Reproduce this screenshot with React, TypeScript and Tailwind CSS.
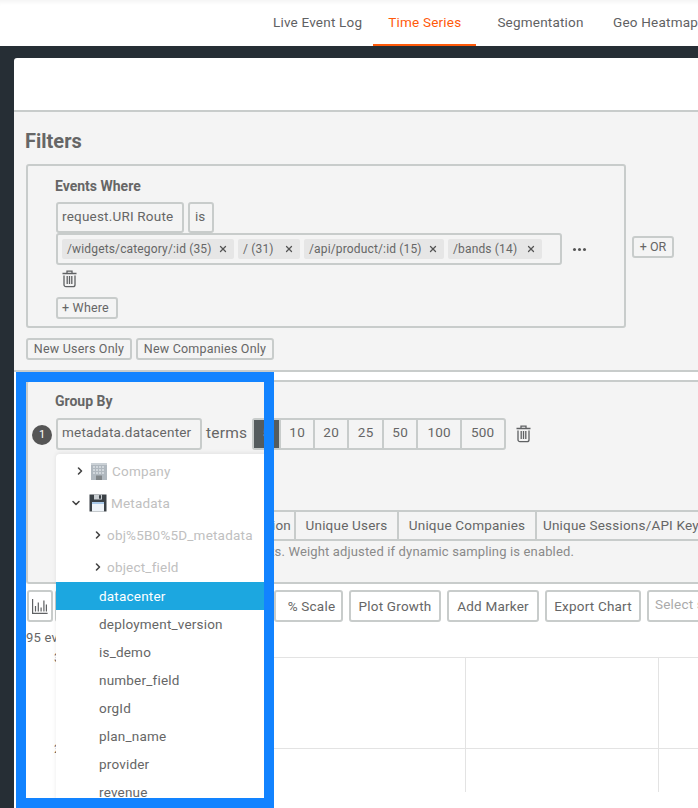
import { ChevronDown, ChevronRight, X } from 'lucide-react'

const tabs = ['Live Event Log', 'Time Series', 'Segmentation', 'Geo Heatmap']
const chips = [
  { label: '/widgets/category/:id (35)', width: 'w-[172px]' },
  { label: '/ (31)', width: 'w-[62px]' },
  { label: '/api/product/:id (15)', width: 'w-[140px]' },
  { label: '/bands (14)', width: 'w-[94px]' },
]
const terms = [
  { label: '10', width: 'w-[34px]' },
  { label: '20', width: 'w-[34px]' },
  { label: '25', width: 'w-[35px]' },
  { label: '50', width: 'w-[34px]' },
  { label: '100', width: 'w-[44px]' },
  { label: '500', width: 'w-[43px]' },
]
const fields = ['deployment_version', 'is_demo', 'number_field', 'orgId', 'plan_name', 'provider', 'revenue']
const boxed = 'border-2 border-[#c8cccb] rounded-[3px]'

function TrashIcon() {
  return (
    <svg width="15" height="18" viewBox="0 0 15 18" fill="none" stroke="#5f6163" strokeWidth="1.3">
      <path d="M0.5 3.5h14M5 3.2V1.2h5v2" />
      <path d="M2 5.5v9.2a2 2 0 0 0 2 2h7a2 2 0 0 0 2-2V5.5" />
      <path d="M5.2 6v8M7.5 6v8M9.8 6v8" />
    </svg>
  )
}

function BarsIcon() {
  return (
    <svg width="16" height="17" viewBox="0 0 16 17" fill="none" stroke="#5f6163" strokeWidth="1.2">
      <path d="M0.6 1v14.4h15" />
      <path d="M3.5 13.5V8M6.3 13.5V4.5M9.1 13.5V9.5M11.9 13.5V2.5M14.4 13.5V6.5" />
    </svg>
  )
}

function BuildingIcon() {
  return (
    <svg width="18" height="18" viewBox="0 0 18 18" className="opacity-60">
      <rect x="1" y="1" width="16" height="17" fill="#7d8a96" />
      <rect x="1" y="1" width="16" height="2" fill="#a9b3bb" />
      <path d="M3 5h12M3 8h12M3 11h12" stroke="#c3ccd3" strokeWidth="1.4" strokeDasharray="2 1" />
      <rect x="6" y="13.5" width="6" height="4.5" fill="#2e363c" />
    </svg>
  )
}

function FloppyIcon() {
  return (
    <svg width="18" height="18" viewBox="0 0 18 18">
      <path d="M0.5 0.5h17v17h-17z" fill="#3b4146" />
      <rect x="3" y="8" width="12" height="9.5" fill="#eef3f8" />
      <rect x="3" y="8" width="12" height="2" fill="#a8c8e8" />
      <rect x="5" y="0.5" width="8" height="5" fill="#c9ced2" />
      <rect x="10" y="1.2" width="2" height="3.5" fill="#3b4146" />
    </svg>
  )
}

function Dropdown() {
  return (
    <div className="absolute left-[56px] top-[454px] w-[212px] h-[354px] overflow-hidden bg-white rounded-t-[4px] shadow-[0_-1px_4px_rgba(0,0,0,0.08)] text-[13.5px] tracking-[0.2px]">
      <div className="flex items-center h-[32px] mt-[1px] pl-[18px] text-[#c0c0c0]">
        <ChevronRight size={12} strokeWidth={3.2} className="text-[#444]" />
        <span className="ml-[4px]"><BuildingIcon /></span>
        <span className="ml-[4px]">Company</span>
      </div>
      <div className="flex items-center h-[32px] pl-[14px] text-[#c0c0c0]">
        <ChevronDown size={12} strokeWidth={3.2} className="text-[#444]" />
        <span className="ml-[7px]"><FloppyIcon /></span>
        <span className="ml-[4px]">Metadata</span>
      </div>
      <div className="flex items-center h-[32px] pl-[36px] text-[#c0c0c0]">
        <ChevronRight size={12} strokeWidth={3.2} className="text-[#444]" />
        <span className="ml-[3px] whitespace-nowrap">obj%5B0%5D_metadata</span>
      </div>
      <div className="flex items-center h-[32px] pl-[36px] text-[#c0c0c0]">
        <ChevronRight size={12} strokeWidth={3.2} className="text-[#444]" />
        <span className="ml-[3px]">object_field</span>
      </div>
      <div className="flex items-center h-[28px] -mt-[1px] pl-[43px] bg-[#1ca7e0] text-white">datacenter</div>
      {fields.map((field) => (
        <div key={field} className="flex items-center h-[28px] pl-[43px] text-[#666]">
          {field}
        </div>
      ))}
    </div>
  )
}

function FiltersSection() {
  return (
    <section className="h-[260px] shrink-0 bg-[#f4f4f4] border-b-2 border-[#c8cccb] text-[#666]">
      <h2 className="pl-[11px] pt-[17px] h-[52px] text-[20px] leading-[24px] font-bold">Filters</h2>
      <div className="flex ml-[12px] items-start">
        <div className={`w-[600px] h-[164px] pl-[28px] ${boxed}`}>
          <div className="h-[36px] pt-[10px] -ml-[1px] text-[14px] leading-[20px] font-bold">Events Where</div>
          <div className="flex gap-[4px]">
            <div className={`w-[128px] h-[31px] pl-[4px] text-[13.5px] leading-[25px] tracking-[0.2px] ${boxed}`}>request.URI Route</div>
            <div className={`w-[26px] h-[31px] pl-[5px] text-[13.5px] leading-[25px] ${boxed}`}>is</div>
          </div>
          <div className="flex items-center">
            <div className={`flex items-center gap-[4px] w-[506px] h-[32px] pl-[4px] ${boxed}`}>
              {chips.map((chip) => (
                <div key={chip.label} className={`flex items-center justify-between h-[20px] pl-[5px] pr-[6px] bg-[#e6e6e6] rounded-[2px] text-[12px] tracking-[0.15px] ${chip.width}`}>
                  <span className="whitespace-nowrap">{chip.label}</span>
                  <X size={10} strokeWidth={3} className="text-[#555]" />
                </div>
              ))}
            </div>
            <span className="ml-[11px] flex gap-[2px]">
              <i className="w-[3px] h-[3px] rounded-full bg-[#555]" />
              <i className="w-[3px] h-[3px] rounded-full bg-[#555]" />
              <i className="w-[3px] h-[3px] rounded-full bg-[#555]" />
            </span>
          </div>
          <div className="ml-[6px] mt-[5px] h-[18px]"><TrashIcon /></div>
          <button className={`block mt-[9px] w-[62px] h-[22px] pl-[4px] text-left text-[12.5px] leading-[16px] tracking-[0.2px] ${boxed}`}>+ Where</button>
        </div>
        <button className={`ml-[6px] mt-[72px] w-[42px] h-[22px] text-[12.5px] leading-[16px] ${boxed}`}>+ OR</button>
      </div>
      <div className="flex gap-[4px] ml-[12px] mt-[10px]">
        <button className={`w-[106px] h-[22px] text-[12.5px] leading-[16px] tracking-[0.2px] ${boxed}`}>New Users Only</button>
        <button className={`w-[138px] h-[22px] text-[12.5px] leading-[16px] tracking-[0.2px] ${boxed}`}>New Companies Only</button>
      </div>
    </section>
  )
}

function GroupBySection() {
  return (
    <section className="ml-[12px] h-[204px] shrink-0 bg-[#f4f4f4] border-t-2 border-b-2 border-l-2 border-[#c8cccb] rounded-l-[3px] text-[#666]">
      <div className="pl-[27px] pt-[9px] h-[36px] text-[14px] leading-[20px] font-bold">Group By</div>
      <div className="flex items-center pl-[4px]">
        <span className="flex items-center justify-center w-[20px] h-[20px] rounded-full bg-[#555] text-white text-[11px] mt-[2px]">1</span>
        <div className={`ml-[4px] w-[146px] h-[32px] pl-[4px] text-[13.5px] leading-[24px] tracking-[0.2px] whitespace-nowrap ${boxed}`}>metadata.datacenter</div>
        <span className="ml-[4px] text-[15.5px] tracking-[0.2px]">terms</span>
        <div className={`flex ml-[5px] w-[254px] h-[32px] ${boxed}`}>
          <div className="w-[25px] bg-[#555c5e] text-white text-center text-[13.5px] leading-[24px]">5</div>
          {terms.map((term) => (
            <div key={term.label} className={`border-l-2 border-[#c8cccb] text-center text-[13.5px] leading-[24px] tracking-[0.2px] ${term.width}`}>
              {term.label}
            </div>
          ))}
        </div>
        <span className="ml-[10px]"><TrashIcon /></span>
      </div>
      <div className="flex mt-[60px] ml-[28px] h-[31px] w-[700px] border-t-2 border-b-2 border-[#c8cccb] text-[13.5px] leading-[26px] tracking-[0.2px] whitespace-nowrap">
        <div className="w-[238px] pr-[3px] text-right">Distribution</div>
        <div className="w-[103px] border-l-2 border-[#c8cccb] text-center">Unique Users</div>
        <div className="w-[138px] border-l-2 border-[#c8cccb] text-center">Unique Companies</div>
        <div className="border-l-2 border-[#c8cccb] pl-[6px]">Unique Sessions/API Keys</div>
      </div>
      <div className="w-[546px] mt-[3px] text-right text-[13px] leading-[16px] tracking-[0.15px] text-[#8a8a8a] whitespace-nowrap">
        Estimated from sampled events. Weight adjusted if dynamic sampling is enabled.
      </div>
    </section>
  )
}

function Toolbar() {
  const btn = `h-[32px] shrink-0 text-center text-[13.5px] leading-[24px] tracking-[0.2px] ${boxed}`
  return (
    <div className="flex items-center ml-[13px] mt-[6px] text-[#666]">
      <button className={`flex items-center justify-center w-[26px] ${btn}`}><BarsIcon /></button>
      <button className={`ml-[2px] w-[92px] ${btn}`}>Area</button>
      <button className={`ml-[6px] w-[115px] ${btn}`}>Stacked</button>
      <button className={`ml-[6px] w-[69px] pl-[6px] ${btn}`}>% Scale</button>
      <button className={`ml-[6px] w-[92px] ${btn}`}>Plot Growth</button>
      <button className={`ml-[6px] w-[92px] ${btn}`}>Add Marker</button>
      <button className={`ml-[6px] w-[96px] ${btn}`}>Export Chart</button>
      <div className={`ml-[6px] w-[120px] pl-[6px] text-[#aaa] whitespace-nowrap ${btn} text-left`}>Select series</div>
    </div>
  )
}

function Chart() {
  return (
    <svg width="684" height="170" viewBox="0 0 684 170" className="block">
      <text x="12" y="20" fontFamily="Roboto, sans-serif" fontSize="13" letterSpacing="0.2" fill="#666">95 events</text>
      <text x="40" y="40" fontFamily="Roboto, sans-serif" fontSize="13" fill="#666">3</text>
      <text x="40" y="131" fontFamily="Roboto, sans-serif" fontSize="13" fill="#666">2</text>
      <path d="M41 35.5H684M41 126.5H684M451.5 35V170M644.5 35V170" stroke="#e3e3e3" />
    </svg>
  )
}

export default function App() {
  return (
    <div className="relative flex flex-col w-[698px] h-[808px] overflow-hidden bg-[#262e35] font-['Roboto',sans-serif]">
      <header className="relative flex shrink-0 h-[46px] bg-white shadow-[inset_0_5px_4px_-3px_rgba(0,0,0,0.05)] text-[13.5px] tracking-[0.2px] text-[#5f6163] whitespace-nowrap">
        {tabs.map((tab, i) => (
          <div
            key={tab}
            className={
              i === 0
                ? 'ml-[273px] w-[111px] pt-[12px] leading-[20px]'
                : i === 1
                  ? 'w-[114px] pt-[12px] leading-[20px] text-center text-[#ff5a0a] border-b-2 border-[#ff5a0a]'
                  : i === 2
                    ? 'ml-[21px] w-[128px] pt-[12px] leading-[20px]'
                    : 'pt-[12px] leading-[20px]'
            }
          >
            {tab}
          </div>
        ))}
      </header>

      <main className="flex-1 min-h-0 pl-[14px] pt-[12px]">
        <div className="flex flex-col h-full overflow-hidden bg-white rounded-tl-[3px]">
          <div className="h-[54px] shrink-0 border-b-2 border-[#c8cccb]" />
          <FiltersSection />
          <div className="h-[8px] shrink-0" />
          <GroupBySection />
          <Toolbar />
          <Chart />
        </div>
      </main>

      <Dropdown />
      {/* annotation frame drawn over the screenshot */}
      <div className="absolute left-[16px] top-[372px] w-[258px] h-[436px] border-[10px] border-[#1283ff]" />
    </div>
  )
}
